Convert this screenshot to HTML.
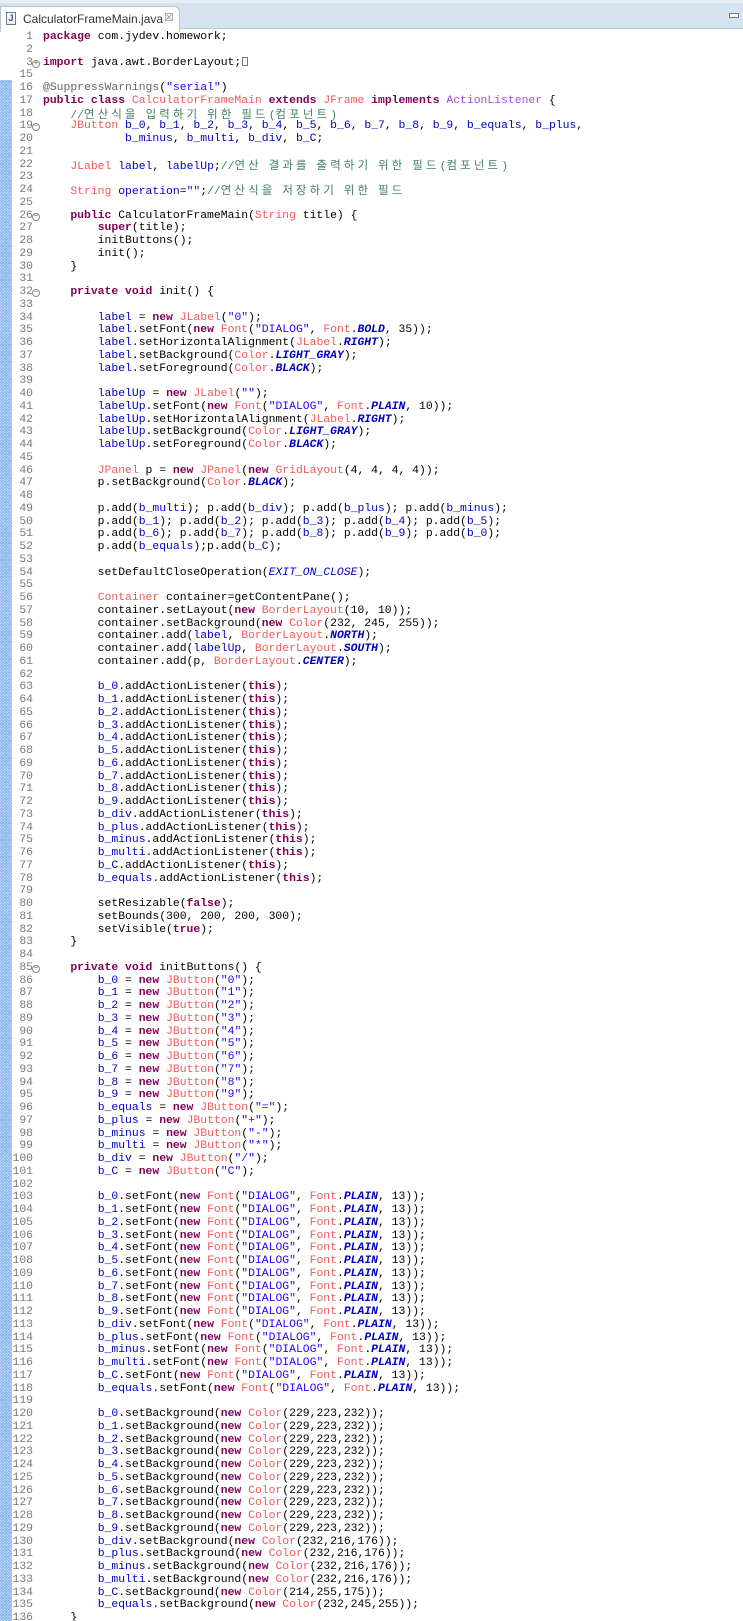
<!DOCTYPE html>
<html><head><meta charset="utf-8">
<style>
*{margin:0;padding:0;box-sizing:border-box}
html,body{width:743px;height:1621px;background:#fff;overflow:hidden}
body{position:relative;font-family:"Liberation Mono","Noto Sans CJK KR",monospace}
#bar{position:absolute;left:0;top:0;width:743px;height:29px;background:#d5e2f0;border-bottom:1px solid #c0ccda;border-top:3px solid #e8eef6}
#tab{position:absolute;left:0;top:3px;width:180px;height:26px;background:#fff;border:1px solid #b6c4d4;border-bottom:none;border-radius:0 6px 0 0}
#tab .ic{position:absolute;left:5px;top:5px;width:10px;height:13px;border:1px solid #6a7a90;background:#f4f6fa;font:bold 9px "Liberation Sans",sans-serif;color:#324c8c;text-align:center;line-height:11px}
#tab .t{position:absolute;left:22px;top:5px;font:12px "Liberation Sans",sans-serif;color:#333}
#tab .x{position:absolute;left:163px;top:4px;font:11px "Liberation Sans",sans-serif;color:#888}
#min{position:absolute;left:729px;top:10px;width:10px;height:5px;border:1px solid #777;background:#fff}
#stripe{position:absolute;left:0;top:80px;width:12px;height:1541px;background-color:#cfe0f8;background-image:repeating-linear-gradient(45deg,#8fb8ee 0 1px,transparent 1px 2px),repeating-linear-gradient(-45deg,#8fb8ee 0 1px,transparent 1px 2px)}
#code{position:absolute;left:0;top:31px;width:743px}
.r{height:12.76px;line-height:12.76px;font-size:11.4px;white-space:pre;position:relative;color:#000}
.n{position:absolute;left:0;width:33px;text-align:right;color:#787878}
.fo{position:absolute;left:32px;top:3px;width:8px;height:8px;border:1px solid #8a8a8a;border-radius:50%;font-size:7px;line-height:6px;text-align:center;color:#555;background:#fff}
.c{position:absolute;left:43px}
b{color:#7f0055;font-weight:bold}
u{color:#f25a5a;text-decoration:none}
s{color:#2a00ff;text-decoration:none}
var{color:#0000c0;font-style:normal}
em{color:#0000c0;font-weight:bold;font-style:italic}
cite{color:#3f7f5f;font-style:normal}
dfn{color:#a64bd8;font-style:normal}
.a{color:#646464}
.h{letter-spacing:3.2px;font-family:"Noto Sans CJK KR","Liberation Mono",monospace}
.box{display:inline-block;width:6px;height:9px;border:1px solid #777;vertical-align:-1px;margin-left:1px}
</style></head><body>
<div id="bar"><div id="tab"><div class="ic">J</div><div class="t">CalculatorFrameMain.java</div><div class="x">☒</div></div><div id="min"></div></div>
<div id="stripe"></div>
<div id="code">
<div class="r"><span class="n">1</span><span class="c"><b>package</b> com.jydev.homework;</span></div>
<div class="r"><span class="n">2</span></div>
<div class="r"><span class="n">3</span><span class="fo">+</span><span class="c"><b>import</b> java.awt.BorderLayout;<span class="box"></span></span></div>
<div class="r"><span class="n">15</span></div>
<div class="r"><span class="n">16</span><span class="c"><span class="a">@SuppressWarnings</span>(<s>"serial"</s>)</span></div>
<div class="r"><span class="n">17</span><span class="c"><b>public</b> <b>class</b> <u>CalculatorFrameMain</u> <b>extends</b> <u>JFrame</u> <b>implements</b> <dfn>ActionListener</dfn> {</span></div>
<div class="r"><span class="n">18</span><span class="c">    <cite>//<span class="h">연산식을</span> <span class="h">입력하기</span> <span class="h">위한</span> <span class="h">필드</span>(<span class="h">컴포넌트</span>)</cite></span></div>
<div class="r"><span class="n">19</span><span class="fo">−</span><span class="c">    <u>JButton</u> <var>b_0</var>, <var>b_1</var>, <var>b_2</var>, <var>b_3</var>, <var>b_4</var>, <var>b_5</var>, <var>b_6</var>, <var>b_7</var>, <var>b_8</var>, <var>b_9</var>, <var>b_equals</var>, <var>b_plus</var>,</span></div>
<div class="r"><span class="n">20</span><span class="c">            <var>b_minus</var>, <var>b_multi</var>, <var>b_div</var>, <var>b_C</var>;</span></div>
<div class="r"><span class="n">21</span></div>
<div class="r"><span class="n">22</span><span class="c">    <u>JLabel</u> <var>label</var>, <var>labelUp</var>;<cite>//<span class="h">연산</span> <span class="h">결과를</span> <span class="h">출력하기</span> <span class="h">위한</span> <span class="h">필드</span>(<span class="h">컴포넌트</span>)</cite></span></div>
<div class="r"><span class="n">23</span></div>
<div class="r"><span class="n">24</span><span class="c">    <u>String</u> <var>operation</var>=<s>""</s>;<cite>//<span class="h">연산식을</span> <span class="h">저장하기</span> <span class="h">위한</span> <span class="h">필드</span></cite></span></div>
<div class="r"><span class="n">25</span></div>
<div class="r"><span class="n">26</span><span class="fo">−</span><span class="c">    <b>public</b> CalculatorFrameMain(<u>String</u> title) {</span></div>
<div class="r"><span class="n">27</span><span class="c">        <b>super</b>(title);</span></div>
<div class="r"><span class="n">28</span><span class="c">        initButtons();</span></div>
<div class="r"><span class="n">29</span><span class="c">        init();</span></div>
<div class="r"><span class="n">30</span><span class="c">    }</span></div>
<div class="r"><span class="n">31</span></div>
<div class="r"><span class="n">32</span><span class="fo">−</span><span class="c">    <b>private</b> <b>void</b> init() {</span></div>
<div class="r"><span class="n">33</span></div>
<div class="r"><span class="n">34</span><span class="c">        <var>label</var> = <b>new</b> <u>JLabel</u>(<s>"0"</s>);</span></div>
<div class="r"><span class="n">35</span><span class="c">        <var>label</var>.setFont(<b>new</b> <u>Font</u>(<s>"DIALOG"</s>, <u>Font</u>.<em>BOLD</em>, 35));</span></div>
<div class="r"><span class="n">36</span><span class="c">        <var>label</var>.setHorizontalAlignment(<u>JLabel</u>.<em>RIGHT</em>);</span></div>
<div class="r"><span class="n">37</span><span class="c">        <var>label</var>.setBackground(<u>Color</u>.<em>LIGHT_GRAY</em>);</span></div>
<div class="r"><span class="n">38</span><span class="c">        <var>label</var>.setForeground(<u>Color</u>.<em>BLACK</em>);</span></div>
<div class="r"><span class="n">39</span></div>
<div class="r"><span class="n">40</span><span class="c">        <var>labelUp</var> = <b>new</b> <u>JLabel</u>(<s>""</s>);</span></div>
<div class="r"><span class="n">41</span><span class="c">        <var>labelUp</var>.setFont(<b>new</b> <u>Font</u>(<s>"DIALOG"</s>, <u>Font</u>.<em>PLAIN</em>, 10));</span></div>
<div class="r"><span class="n">42</span><span class="c">        <var>labelUp</var>.setHorizontalAlignment(<u>JLabel</u>.<em>RIGHT</em>);</span></div>
<div class="r"><span class="n">43</span><span class="c">        <var>labelUp</var>.setBackground(<u>Color</u>.<em>LIGHT_GRAY</em>);</span></div>
<div class="r"><span class="n">44</span><span class="c">        <var>labelUp</var>.setForeground(<u>Color</u>.<em>BLACK</em>);</span></div>
<div class="r"><span class="n">45</span></div>
<div class="r"><span class="n">46</span><span class="c">        <u>JPanel</u> p = <b>new</b> <u>JPanel</u>(<b>new</b> <u>GridLayout</u>(4, 4, 4, 4));</span></div>
<div class="r"><span class="n">47</span><span class="c">        p.setBackground(<u>Color</u>.<em>BLACK</em>);</span></div>
<div class="r"><span class="n">48</span></div>
<div class="r"><span class="n">49</span><span class="c">        p.add(<var>b_multi</var>); p.add(<var>b_div</var>); p.add(<var>b_plus</var>); p.add(<var>b_minus</var>);</span></div>
<div class="r"><span class="n">50</span><span class="c">        p.add(<var>b_1</var>); p.add(<var>b_2</var>); p.add(<var>b_3</var>); p.add(<var>b_4</var>); p.add(<var>b_5</var>);</span></div>
<div class="r"><span class="n">51</span><span class="c">        p.add(<var>b_6</var>); p.add(<var>b_7</var>); p.add(<var>b_8</var>); p.add(<var>b_9</var>); p.add(<var>b_0</var>);</span></div>
<div class="r"><span class="n">52</span><span class="c">        p.add(<var>b_equals</var>);p.add(<var>b_C</var>);</span></div>
<div class="r"><span class="n">53</span></div>
<div class="r"><span class="n">54</span><span class="c">        setDefaultCloseOperation(<em style="font-weight:normal">EXIT_ON_CLOSE</em>);</span></div>
<div class="r"><span class="n">55</span></div>
<div class="r"><span class="n">56</span><span class="c">        <u>Container</u> container=getContentPane();</span></div>
<div class="r"><span class="n">57</span><span class="c">        container.setLayout(<b>new</b> <u>BorderLayout</u>(10, 10));</span></div>
<div class="r"><span class="n">58</span><span class="c">        container.setBackground(<b>new</b> <u>Color</u>(232, 245, 255));</span></div>
<div class="r"><span class="n">59</span><span class="c">        container.add(<var>label</var>, <u>BorderLayout</u>.<em>NORTH</em>);</span></div>
<div class="r"><span class="n">60</span><span class="c">        container.add(<var>labelUp</var>, <u>BorderLayout</u>.<em>SOUTH</em>);</span></div>
<div class="r"><span class="n">61</span><span class="c">        container.add(p, <u>BorderLayout</u>.<em>CENTER</em>);</span></div>
<div class="r"><span class="n">62</span></div>
<div class="r"><span class="n">63</span><span class="c">        <var>b_0</var>.addActionListener(<b>this</b>);</span></div>
<div class="r"><span class="n">64</span><span class="c">        <var>b_1</var>.addActionListener(<b>this</b>);</span></div>
<div class="r"><span class="n">65</span><span class="c">        <var>b_2</var>.addActionListener(<b>this</b>);</span></div>
<div class="r"><span class="n">66</span><span class="c">        <var>b_3</var>.addActionListener(<b>this</b>);</span></div>
<div class="r"><span class="n">67</span><span class="c">        <var>b_4</var>.addActionListener(<b>this</b>);</span></div>
<div class="r"><span class="n">68</span><span class="c">        <var>b_5</var>.addActionListener(<b>this</b>);</span></div>
<div class="r"><span class="n">69</span><span class="c">        <var>b_6</var>.addActionListener(<b>this</b>);</span></div>
<div class="r"><span class="n">70</span><span class="c">        <var>b_7</var>.addActionListener(<b>this</b>);</span></div>
<div class="r"><span class="n">71</span><span class="c">        <var>b_8</var>.addActionListener(<b>this</b>);</span></div>
<div class="r"><span class="n">72</span><span class="c">        <var>b_9</var>.addActionListener(<b>this</b>);</span></div>
<div class="r"><span class="n">73</span><span class="c">        <var>b_div</var>.addActionListener(<b>this</b>);</span></div>
<div class="r"><span class="n">74</span><span class="c">        <var>b_plus</var>.addActionListener(<b>this</b>);</span></div>
<div class="r"><span class="n">75</span><span class="c">        <var>b_minus</var>.addActionListener(<b>this</b>);</span></div>
<div class="r"><span class="n">76</span><span class="c">        <var>b_multi</var>.addActionListener(<b>this</b>);</span></div>
<div class="r"><span class="n">77</span><span class="c">        <var>b_C</var>.addActionListener(<b>this</b>);</span></div>
<div class="r"><span class="n">78</span><span class="c">        <var>b_equals</var>.addActionListener(<b>this</b>);</span></div>
<div class="r"><span class="n">79</span></div>
<div class="r"><span class="n">80</span><span class="c">        setResizable(<b>false</b>);</span></div>
<div class="r"><span class="n">81</span><span class="c">        setBounds(300, 200, 200, 300);</span></div>
<div class="r"><span class="n">82</span><span class="c">        setVisible(<b>true</b>);</span></div>
<div class="r"><span class="n">83</span><span class="c">    }</span></div>
<div class="r"><span class="n">84</span></div>
<div class="r"><span class="n">85</span><span class="fo">−</span><span class="c">    <b>private</b> <b>void</b> initButtons() {</span></div>
<div class="r"><span class="n">86</span><span class="c">        <var>b_0</var> = <b>new</b> <u>JButton</u>(<s>"0"</s>);</span></div>
<div class="r"><span class="n">87</span><span class="c">        <var>b_1</var> = <b>new</b> <u>JButton</u>(<s>"1"</s>);</span></div>
<div class="r"><span class="n">88</span><span class="c">        <var>b_2</var> = <b>new</b> <u>JButton</u>(<s>"2"</s>);</span></div>
<div class="r"><span class="n">89</span><span class="c">        <var>b_3</var> = <b>new</b> <u>JButton</u>(<s>"3"</s>);</span></div>
<div class="r"><span class="n">90</span><span class="c">        <var>b_4</var> = <b>new</b> <u>JButton</u>(<s>"4"</s>);</span></div>
<div class="r"><span class="n">91</span><span class="c">        <var>b_5</var> = <b>new</b> <u>JButton</u>(<s>"5"</s>);</span></div>
<div class="r"><span class="n">92</span><span class="c">        <var>b_6</var> = <b>new</b> <u>JButton</u>(<s>"6"</s>);</span></div>
<div class="r"><span class="n">93</span><span class="c">        <var>b_7</var> = <b>new</b> <u>JButton</u>(<s>"7"</s>);</span></div>
<div class="r"><span class="n">94</span><span class="c">        <var>b_8</var> = <b>new</b> <u>JButton</u>(<s>"8"</s>);</span></div>
<div class="r"><span class="n">95</span><span class="c">        <var>b_9</var> = <b>new</b> <u>JButton</u>(<s>"9"</s>);</span></div>
<div class="r"><span class="n">96</span><span class="c">        <var>b_equals</var> = <b>new</b> <u>JButton</u>(<s>"="</s>);</span></div>
<div class="r"><span class="n">97</span><span class="c">        <var>b_plus</var> = <b>new</b> <u>JButton</u>(<s>"+"</s>);</span></div>
<div class="r"><span class="n">98</span><span class="c">        <var>b_minus</var> = <b>new</b> <u>JButton</u>(<s>"-"</s>);</span></div>
<div class="r"><span class="n">99</span><span class="c">        <var>b_multi</var> = <b>new</b> <u>JButton</u>(<s>"*"</s>);</span></div>
<div class="r"><span class="n">100</span><span class="c">        <var>b_div</var> = <b>new</b> <u>JButton</u>(<s>"/"</s>);</span></div>
<div class="r"><span class="n">101</span><span class="c">        <var>b_C</var> = <b>new</b> <u>JButton</u>(<s>"C"</s>);</span></div>
<div class="r"><span class="n">102</span></div>
<div class="r"><span class="n">103</span><span class="c">        <var>b_0</var>.setFont(<b>new</b> <u>Font</u>(<s>"DIALOG"</s>, <u>Font</u>.<em>PLAIN</em>, 13));</span></div>
<div class="r"><span class="n">104</span><span class="c">        <var>b_1</var>.setFont(<b>new</b> <u>Font</u>(<s>"DIALOG"</s>, <u>Font</u>.<em>PLAIN</em>, 13));</span></div>
<div class="r"><span class="n">105</span><span class="c">        <var>b_2</var>.setFont(<b>new</b> <u>Font</u>(<s>"DIALOG"</s>, <u>Font</u>.<em>PLAIN</em>, 13));</span></div>
<div class="r"><span class="n">106</span><span class="c">        <var>b_3</var>.setFont(<b>new</b> <u>Font</u>(<s>"DIALOG"</s>, <u>Font</u>.<em>PLAIN</em>, 13));</span></div>
<div class="r"><span class="n">107</span><span class="c">        <var>b_4</var>.setFont(<b>new</b> <u>Font</u>(<s>"DIALOG"</s>, <u>Font</u>.<em>PLAIN</em>, 13));</span></div>
<div class="r"><span class="n">108</span><span class="c">        <var>b_5</var>.setFont(<b>new</b> <u>Font</u>(<s>"DIALOG"</s>, <u>Font</u>.<em>PLAIN</em>, 13));</span></div>
<div class="r"><span class="n">109</span><span class="c">        <var>b_6</var>.setFont(<b>new</b> <u>Font</u>(<s>"DIALOG"</s>, <u>Font</u>.<em>PLAIN</em>, 13));</span></div>
<div class="r"><span class="n">110</span><span class="c">        <var>b_7</var>.setFont(<b>new</b> <u>Font</u>(<s>"DIALOG"</s>, <u>Font</u>.<em>PLAIN</em>, 13));</span></div>
<div class="r"><span class="n">111</span><span class="c">        <var>b_8</var>.setFont(<b>new</b> <u>Font</u>(<s>"DIALOG"</s>, <u>Font</u>.<em>PLAIN</em>, 13));</span></div>
<div class="r"><span class="n">112</span><span class="c">        <var>b_9</var>.setFont(<b>new</b> <u>Font</u>(<s>"DIALOG"</s>, <u>Font</u>.<em>PLAIN</em>, 13));</span></div>
<div class="r"><span class="n">113</span><span class="c">        <var>b_div</var>.setFont(<b>new</b> <u>Font</u>(<s>"DIALOG"</s>, <u>Font</u>.<em>PLAIN</em>, 13));</span></div>
<div class="r"><span class="n">114</span><span class="c">        <var>b_plus</var>.setFont(<b>new</b> <u>Font</u>(<s>"DIALOG"</s>, <u>Font</u>.<em>PLAIN</em>, 13));</span></div>
<div class="r"><span class="n">115</span><span class="c">        <var>b_minus</var>.setFont(<b>new</b> <u>Font</u>(<s>"DIALOG"</s>, <u>Font</u>.<em>PLAIN</em>, 13));</span></div>
<div class="r"><span class="n">116</span><span class="c">        <var>b_multi</var>.setFont(<b>new</b> <u>Font</u>(<s>"DIALOG"</s>, <u>Font</u>.<em>PLAIN</em>, 13));</span></div>
<div class="r"><span class="n">117</span><span class="c">        <var>b_C</var>.setFont(<b>new</b> <u>Font</u>(<s>"DIALOG"</s>, <u>Font</u>.<em>PLAIN</em>, 13));</span></div>
<div class="r"><span class="n">118</span><span class="c">        <var>b_equals</var>.setFont(<b>new</b> <u>Font</u>(<s>"DIALOG"</s>, <u>Font</u>.<em>PLAIN</em>, 13));</span></div>
<div class="r"><span class="n">119</span></div>
<div class="r"><span class="n">120</span><span class="c">        <var>b_0</var>.setBackground(<b>new</b> <u>Color</u>(229,223,232));</span></div>
<div class="r"><span class="n">121</span><span class="c">        <var>b_1</var>.setBackground(<b>new</b> <u>Color</u>(229,223,232));</span></div>
<div class="r"><span class="n">122</span><span class="c">        <var>b_2</var>.setBackground(<b>new</b> <u>Color</u>(229,223,232));</span></div>
<div class="r"><span class="n">123</span><span class="c">        <var>b_3</var>.setBackground(<b>new</b> <u>Color</u>(229,223,232));</span></div>
<div class="r"><span class="n">124</span><span class="c">        <var>b_4</var>.setBackground(<b>new</b> <u>Color</u>(229,223,232));</span></div>
<div class="r"><span class="n">125</span><span class="c">        <var>b_5</var>.setBackground(<b>new</b> <u>Color</u>(229,223,232));</span></div>
<div class="r"><span class="n">126</span><span class="c">        <var>b_6</var>.setBackground(<b>new</b> <u>Color</u>(229,223,232));</span></div>
<div class="r"><span class="n">127</span><span class="c">        <var>b_7</var>.setBackground(<b>new</b> <u>Color</u>(229,223,232));</span></div>
<div class="r"><span class="n">128</span><span class="c">        <var>b_8</var>.setBackground(<b>new</b> <u>Color</u>(229,223,232));</span></div>
<div class="r"><span class="n">129</span><span class="c">        <var>b_9</var>.setBackground(<b>new</b> <u>Color</u>(229,223,232));</span></div>
<div class="r"><span class="n">130</span><span class="c">        <var>b_div</var>.setBackground(<b>new</b> <u>Color</u>(232,216,176));</span></div>
<div class="r"><span class="n">131</span><span class="c">        <var>b_plus</var>.setBackground(<b>new</b> <u>Color</u>(232,216,176));</span></div>
<div class="r"><span class="n">132</span><span class="c">        <var>b_minus</var>.setBackground(<b>new</b> <u>Color</u>(232,216,176));</span></div>
<div class="r"><span class="n">133</span><span class="c">        <var>b_multi</var>.setBackground(<b>new</b> <u>Color</u>(232,216,176));</span></div>
<div class="r"><span class="n">134</span><span class="c">        <var>b_C</var>.setBackground(<b>new</b> <u>Color</u>(214,255,175));</span></div>
<div class="r"><span class="n">135</span><span class="c">        <var>b_equals</var>.setBackground(<b>new</b> <u>Color</u>(232,245,255));</span></div>
<div class="r"><span class="n">136</span><span class="c">    }</span></div>
</div>
</body></html>
